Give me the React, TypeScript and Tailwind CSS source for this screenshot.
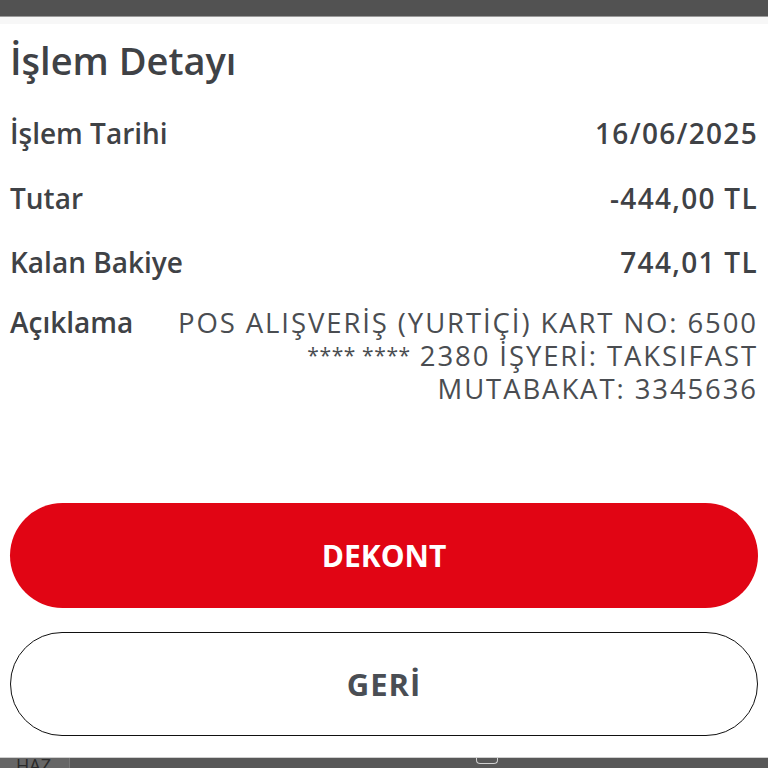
export default function App() {
  const rows = [
    { label: "İşlem Tarihi", value: "16/06/2025" },
    { label: "Tutar", value: "-444,00 TL" },
    { label: "Kalan Bakiye", value: "744,01 TL" },
  ];

  return (
    <div
      className="w-[768px] h-[768px] overflow-hidden bg-white flex flex-col text-[#3f4246]"
      style={{ fontFamily: "'Open Sans', 'Noto Sans', sans-serif" }}
    >
      {/* üst koyu şerit */}
      <div className="h-[16px] bg-[#525252] shrink-0" />
      <div className="h-[8px] bg-[#f7f7f7] border-t border-[#9a9a9a] shrink-0" />

      <div className="flex-1 flex flex-col px-[10px]">
        <h1 className="mt-[14px] text-[38px] leading-[44px] font-semibold">
          İşlem Detayı
        </h1>

        <div className="mt-[33px] flex flex-col gap-[28.5px]">
          {rows.map((r) => (
            <div key={r.label} className="flex justify-between items-center h-[36px]">
              <span className="text-[28px] font-semibold">{r.label}</span>
              <span className="text-[28px] font-semibold tracking-[1.3px]">{r.value}</span>
            </div>
          ))}
        </div>

        <div className="mt-[26px] flex items-start justify-between">
          <span className="text-[28px] font-semibold leading-[33px]">Açıklama</span>
          <p className="text-[27.5px] leading-[33px] text-right font-normal text-[#4a4d51] tracking-[1.9px] w-[600px]">
            POS ALIŞVERİŞ (YURTİÇİ) KART NO: 6500
            <br />
            <span className="text-[21px] tracking-[0.6px] align-top">**** ****</span> 2380 İŞYERİ: TAKSIFAST
            <br />
            MUTABAKAT: 3345636
          </p>
        </div>

        <button className="mt-[98px] h-[105px] w-full rounded-full bg-[#e10514] text-white text-[30px] font-bold">
          DEKONT
        </button>
        <button className="mt-[24px] h-[104px] w-full rounded-full border-[1.5px] border-[#111] bg-white text-[#4a4e54] text-[31px] font-bold tracking-[1px]">
          GERİ
        </button>
      </div>

      {/* alt şerit */}
      <div className="h-[11px] mt-auto bg-[#585858] border-t border-[#cfcfcf] flex shrink-0 relative">
        <div className="w-[70px] bg-[#666] border-r border-[#777] text-[#2a2a2a] text-[18px] leading-[10px] overflow-hidden pl-[16px] pt-[2px]">
          HAZ
        </div>
        <div className="absolute left-[476px] top-0 w-[22px] h-[6px] border border-t-0 border-[#d0d0d0] rounded-b-[4px]" />
      </div>
    </div>
  );
}
